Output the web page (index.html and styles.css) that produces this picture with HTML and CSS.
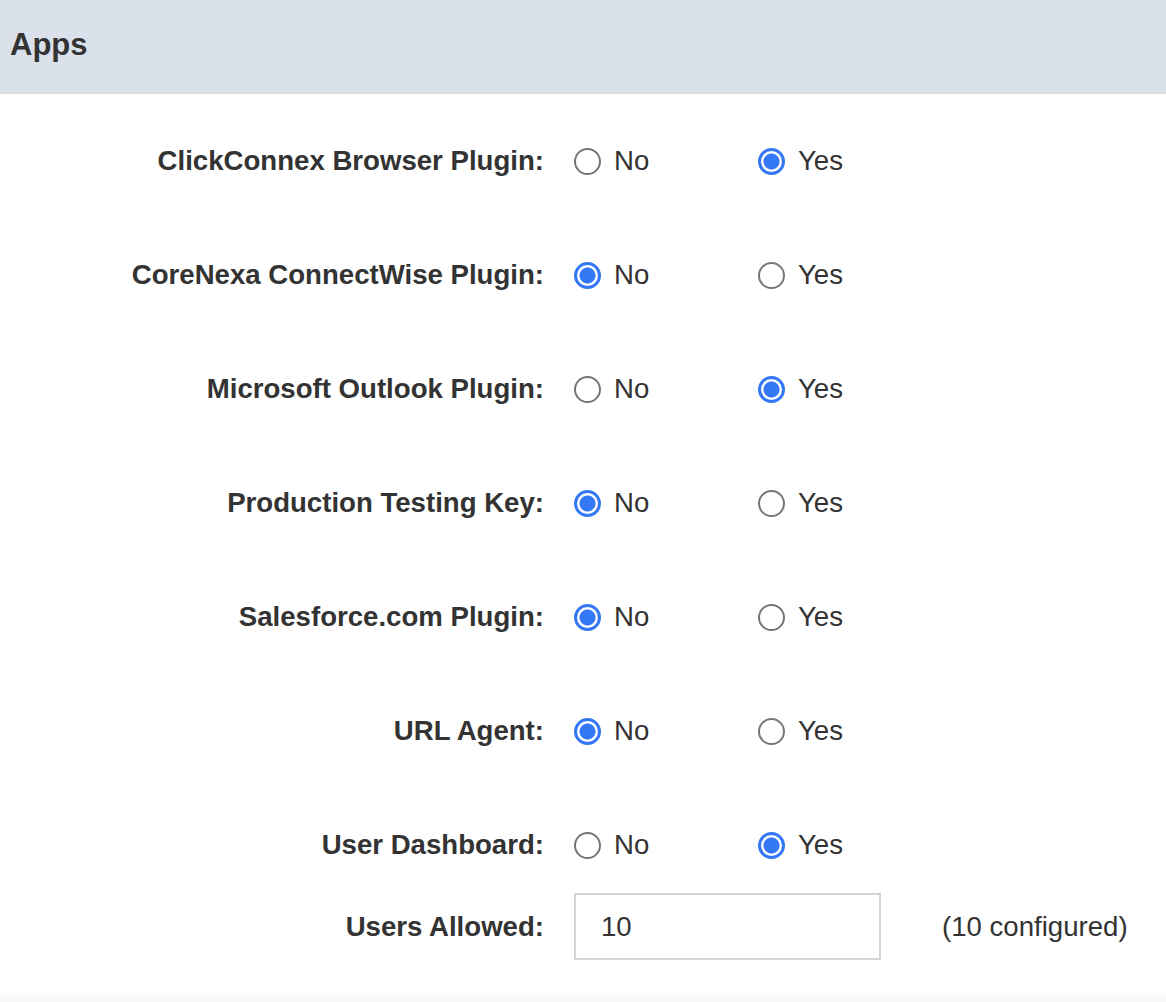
FILE: index.html
```html
<!DOCTYPE html>
<html>
<head>
<meta charset="utf-8">
<link rel="stylesheet" href="styles.css">
</head>
<body>
<div class="panel">
  <div class="panel-header"><h2 class="panel-title">Apps</h2></div>
  <form class="form">
    <div class="row">
      <label class="label">ClickConnex Browser Plugin:</label>
      <div class="options">
        <label class="opt"><input type="radio" name="r1" class="radio"><span>No</span></label>
        <label class="opt"><input type="radio" name="r1" class="radio" checked><span>Yes</span></label>
      </div>
    </div>
    <div class="row">
      <label class="label">CoreNexa ConnectWise Plugin:</label>
      <div class="options">
        <label class="opt"><input type="radio" name="r2" class="radio" checked><span>No</span></label>
        <label class="opt"><input type="radio" name="r2" class="radio"><span>Yes</span></label>
      </div>
    </div>
    <div class="row">
      <label class="label">Microsoft Outlook Plugin:</label>
      <div class="options">
        <label class="opt"><input type="radio" name="r3" class="radio"><span>No</span></label>
        <label class="opt"><input type="radio" name="r3" class="radio" checked><span>Yes</span></label>
      </div>
    </div>
    <div class="row">
      <label class="label">Production Testing Key:</label>
      <div class="options">
        <label class="opt"><input type="radio" name="r4" class="radio" checked><span>No</span></label>
        <label class="opt"><input type="radio" name="r4" class="radio"><span>Yes</span></label>
      </div>
    </div>
    <div class="row">
      <label class="label">Salesforce.com Plugin:</label>
      <div class="options">
        <label class="opt"><input type="radio" name="r5" class="radio" checked><span>No</span></label>
        <label class="opt"><input type="radio" name="r5" class="radio"><span>Yes</span></label>
      </div>
    </div>
    <div class="row">
      <label class="label">URL Agent:</label>
      <div class="options">
        <label class="opt"><input type="radio" name="r6" class="radio" checked><span>No</span></label>
        <label class="opt"><input type="radio" name="r6" class="radio"><span>Yes</span></label>
      </div>
    </div>
    <div class="row">
      <label class="label">User Dashboard:</label>
      <div class="options">
        <label class="opt"><input type="radio" name="r7" class="radio"><span>No</span></label>
        <label class="opt"><input type="radio" name="r7" class="radio" checked><span>Yes</span></label>
      </div>
    </div>
    <div class="row row-input">
      <label class="label">Users Allowed:</label>
      <div class="options">
        <input type="text" class="text-input" value="10">
        <span class="note">(10 configured)</span>
      </div>
    </div>
  </form>
  <div class="footer-fade"></div>
</div>
</body>
</html>
```

FILE: styles.css
```css
html, body {
  margin: 0;
  padding: 0;
  background: #ffffff;
}
body {
  font-family: "Liberation Sans", Arial, Helvetica, sans-serif;
  color: #333333;
  width: 1166px;
  height: 1002px;
  overflow: hidden;
}
.panel {
  display: flex;
  flex-direction: column;
  height: 1002px;
}
.panel-header {
  background: #dae1eb;
  height: 94px;
  border-bottom: 1px solid #dcdcdc;
  display: flex;
  align-items: center;
  padding-left: 10px;
  box-sizing: border-box;
  flex-shrink: 0;
}
.panel-title {
  margin: 0;
  font-size: 31px;
  font-weight: bold;
  color: #333;
  position: relative;
  top: -2px;
}
.form {
  display: flex;
  flex-direction: column;
  padding-top: 51px;
  flex: 1;
}
.row {
  display: grid;
  grid-template-columns: 544px auto;
  column-gap: 30px;
  align-items: center;
  height: 30px;
  margin-bottom: 84px;
}
.row:nth-child(7) {
  margin-bottom: 34px;
}
.row-input {
  height: 67px;
  margin-bottom: 0;
}
.label {
  text-align: right;
  font-weight: bold;
  font-size: 27.6px;
  color: #333;
  white-space: nowrap;
}
.options {
  display: flex;
  align-items: center;
}
.opt {
  display: flex;
  align-items: center;
  width: 184px;
  font-size: 27.6px;
  color: #333;
}
.radio {
  appearance: none;
  -webkit-appearance: none;
  margin: 0 13px 0 0;
  width: 27px;
  height: 27px;
  border-radius: 50%;
  border: 2px solid #767676;
  box-sizing: border-box;
  background: #fff;
  flex-shrink: 0;
}
.radio:checked {
  border: 3px solid #3478f6;
  background: radial-gradient(circle, #3478f6 0, #3478f6 7.5px, #ffffff 8.5px);
}
.text-input {
  width: 307px;
  height: 67px;
  box-sizing: border-box;
  border: 2px solid #d4d4d4;
  padding: 0 0 0 25px;
  font-family: "Liberation Sans", Arial, Helvetica, sans-serif;
  font-size: 27.6px;
  color: #333;
  margin: 0;
  outline: none;
}
.note {
  margin-left: 61px;
  font-size: 27.6px;
  color: #333;
}
.footer-fade {
  height: 14px;
  background: linear-gradient(#ffffff, #f8f8f8);
  flex-shrink: 0;
}
```
